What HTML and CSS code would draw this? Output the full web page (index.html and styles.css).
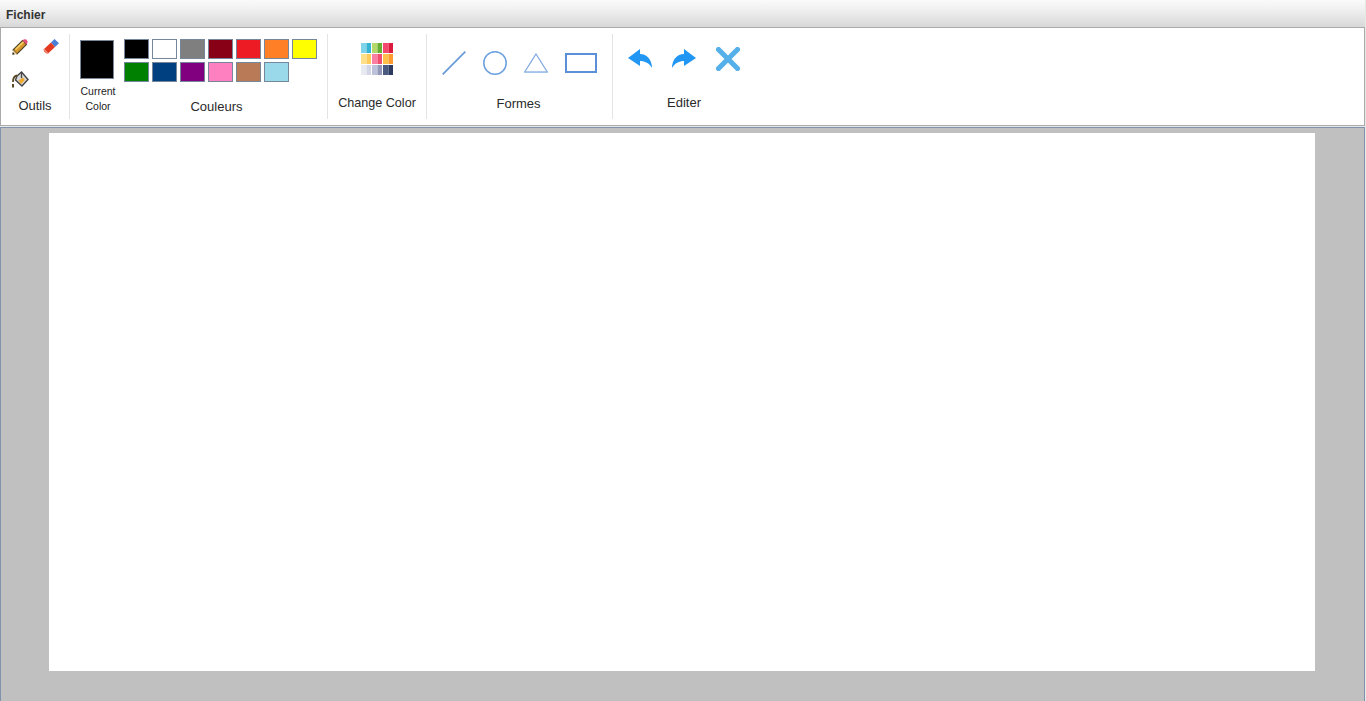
FILE: index.html
```html
<!DOCTYPE html>
<html lang="fr">
<head>
<meta charset="utf-8">
<title>Paint</title>
<link rel="stylesheet" href="styles.css">
</head>
<body>
<div class="app">
  <header class="menubar"><span class="menu-item">Fichier</span></header>
  <section class="ribbon">
    <div class="group tools">
      <div class="tool-grid">
        <svg class="tool" viewBox="0 0 16 16"><path d="M1 11 10.500 1.500l4 4L5 15z" fill="#d9962a" stroke="#4f4526" stroke-width="1.100"/><path d="M3.500 10.500 11.500 2.800" stroke="#f8d56b" stroke-width="1.500"/><path d="m10.500 1.500 1.500-1.300 2.500.3 1.300 2.500-1.300 2.500z" fill="#e4507a"/><path d="M1 11 .3 15.700 5 15z" fill="#e9d3a0"/><path d="M.3 15.700 .8 13l2 2.200z" fill="#222"/></svg>
        <svg class="tool" viewBox="0 0 16 16"><path d="M8 3.500 11.500 0 16 4.200 12 8z" fill="#4a7fd8"/><path d="M8 3.500 .5 10.500l1 2.500 3 2 7.500-7z" fill="#e2391f"/><path d="M.5 10.500 4.500 15l1.200-.6L1.200 9.800z" fill="#f7a592"/></svg>
        <svg class="tool" viewBox="0 0 17 17"><path d="M5 5 9.500 1l6.500 7.500-6 6.500L3.500 9z" fill="#d8d8d8" stroke="#444" stroke-width="1.400"/><path d="m6.500 9.500 4.500-3 2 2.500-4 4z" fill="#efa92c"/><path d="M9.500 1v6" stroke="#444" stroke-width="1.300"/><path d="M5 4.500C2 5 1 7.500 1 11" fill="none" stroke="#5a4a26" stroke-width="1.800"/><path d="M1 13v3.500" stroke="#5a4a26" stroke-width="2"/></svg>
      </div>
      <span class="label tools-label">Outils</span>
    </div>
    <div class="group colors">
      <div class="current">
        <div class="current-swatch"></div>
        <span class="small">Current<br>Color</span>
      </div>
      <div class="palette">
        <div class="swatches">
          <i class="sw c1"></i><i class="sw c2"></i><i class="sw c3"></i><i class="sw c4"></i><i class="sw c5"></i><i class="sw c6"></i><i class="sw c7"></i>
          <i class="sw c8"></i><i class="sw c9"></i><i class="sw c10"></i><i class="sw c11"></i><i class="sw c12"></i><i class="sw c13"></i>
        </div>
        <span class="label couleurs-label">Couleurs</span>
      </div>
    </div>
    <div class="group change">
      <svg class="change-icon" viewBox="0 0 32 32">
        <rect width="5.500" height="10" fill="#7fd4ea"/><rect x="5.500" width="4.500" height="10" fill="#35b4d4"/>
        <rect x="11" width="5.500" height="10" fill="#b4d968"/><rect x="16.500" width="4.500" height="10" fill="#66ad32"/>
        <rect x="22" width="5.500" height="10" fill="#f4486c"/><rect x="27.500" width="4.500" height="10" fill="#dc1a3e"/>
        <rect y="11" width="5.500" height="10" fill="#ffe08a"/><rect x="5.500" y="11" width="4.500" height="10" fill="#ffcb5c"/>
        <rect x="11" y="11" width="5.500" height="10" fill="#fb7fa2"/><rect x="16.500" y="11" width="4.500" height="10" fill="#f14e72"/>
        <rect x="22" y="11" width="5.500" height="10" fill="#ffc14a"/><rect x="27.500" y="11" width="4.500" height="10" fill="#ff9a2e"/>
        <rect y="22" width="5.500" height="10" fill="#e8eaf2"/><rect x="5.500" y="22" width="4.500" height="10" fill="#d2d6e6"/>
        <rect x="11" y="22" width="5.500" height="10" fill="#bcc2da"/><rect x="16.500" y="22" width="4.500" height="10" fill="#9398b8"/>
        <rect x="22" y="22" width="5.500" height="10" fill="#4a5a80"/><rect x="27.500" y="22" width="4.500" height="10" fill="#2b3a5e"/>
      </svg>
      <span class="label change-label">Change Color</span>
    </div>
    <div class="group shapes">
      <div class="shape-row">
        <svg class="shape s-line" viewBox="0 0 24 24"><path d="M.7 23.300 23.300.7" stroke="#6a9bd8" stroke-width="1.800" fill="none"/></svg>
        <svg class="shape s-circle" viewBox="0 0 24 24"><circle cx="12" cy="12" r="11.200" stroke="#6a9fe0" stroke-width="1.500" fill="none"/></svg>
        <svg class="shape s-tri" viewBox="0 0 24 20"><path d="M12 1 23.300 19H.7z" stroke="#7ba6e0" stroke-width="1.200" fill="none"/><path d="M.5 19.200h23" stroke="#a3c2ea" stroke-width="1.500"/></svg>
        <svg class="shape s-rect" viewBox="0 0 32 20"><rect x="1" y="1" width="30" height="18" stroke="#5b90d8" stroke-width="2" fill="none"/></svg>
      </div>
      <span class="label formes-label">Formes</span>
    </div>
    <div class="group edit">
      <div class="edit-row">
        <svg class="edit-icon" viewBox="0 0 24 19"><path d="M12 0 0 9l12 8v-5c5 0 9 2 12 7C24 11 19 5 12 5z" fill="#2196f3"/></svg>
        <svg class="edit-icon" viewBox="0 0 24 19"><path d="M12 0 24 9l-12 8v-5c-5 0-9 2-12 7C0 11 5 5 12 5z" fill="#2196f3"/></svg>
        <svg class="edit-icon close" viewBox="0 0 24 24"><path d="M2.500 2.500 21.500 21.500M21.500 2.500 2.500 21.500" stroke="#55b0ea" stroke-width="5.200" stroke-linecap="round"/></svg>
      </div>
      <span class="label">Editer</span>
    </div>
  </section>
  <main class="workspace"><div class="canvas"></div></main>
</div>
</body>
</html>
```
FILE: styles.css
```css
* { box-sizing: border-box; }
html, body { margin: 0; height: 100%; overflow: hidden; }
body { font-family: "Liberation Sans", Arial, sans-serif; color: #222; background: #e8e8e8; }
.app { display: flex; flex-direction: column; width: 1365px; height: 701px; }
.menubar {
  height: 27px; flex: none; padding: 9px 0 0 6px;
  background: linear-gradient(#fafafa, #f2f2f2 30%, #d8d8d8);
  font-size: 12px; font-weight: bold; line-height: 12px; color: #333;
}
.ribbon {
  height: 99px; flex: none; display: flex; background: #fff;
  border: 1px solid #aaa; padding: 6px 0; margin-bottom: 1px;
}
.group { display: flex; flex-direction: column; height: 85px; border-right: 1px solid #e4e4e4; flex: none; }
.label { font-size: 13px; line-height: 14px; text-align: center; display: block; color: #2a2a2a; }
.tools { width: 69px; }
.tool-grid { display: grid; grid-template-columns: 16px 16px; column-gap: 15px; row-gap: 16px; padding: 5px 0 0 11px; }
.tool { width: 16px; height: 16px; display: block; }
.tool:nth-child(3) { width: 17px; height: 17px; }
.tools-label { margin-top: 11px; }
.colors { width: 258px; flex-direction: row; padding-left: 10px; }
.current { width: 36px; display: flex; flex-direction: column; }
.current-swatch { width: 34px; height: 39px; margin-top: 6px; background: #000; border: 1px solid #7a8899; }
.small { font-size: 10.500px; line-height: 15px; text-align: center; margin-top: 5px; white-space: nowrap; }
.palette { width: 193px; margin-left: 8px; padding-top: 5px; }
.swatches { display: grid; grid-template-columns: repeat(7, 25px); grid-auto-rows: 20px; gap: 3px; }
.sw { display: block; border: 1px solid #76879b; }
.c1 { background: #000; } .c2 { background: #fff; } .c3 { background: #7f7f7f; } .c4 { background: #880015; }
.c5 { background: #ed1c24; } .c6 { background: #ff7f27; } .c7 { background: #ff0; } .c8 { background: #008000; }
.c9 { background: #004080; } .c10 { background: #800080; } .c11 { background: #ff80c0; } .c12 { background: #b97a57; }
.c13 { background: #99d9ea; }
.couleurs-label { margin-top: 18px; padding-right: 8px; }
.change { width: 99px; align-items: center; padding-top: 9px; }
.change-icon { width: 32px; height: 32px; display: block; }
.change-label { margin-top: 21px; white-space: nowrap; font-size: 12.600px; }
.shapes { width: 186px; align-items: center; }
.shape-row { display: flex; align-items: center; align-self: flex-start; padding: 17px 0 0 15px; gap: 17px; height: 41px; }
.shape { display: block; flex: none; }
.s-line, .s-circle { width: 24px; height: 24px; }
.s-tri { width: 24px; height: 20px; }
.s-rect { width: 32px; height: 20px; }
.formes-label { margin-top: 22px; padding-right: 2px; }
.edit { width: 240px; border-right: 0; }
.edit-row { display: flex; align-items: flex-start; padding: 13px 0 0 15px; gap: 20px; height: 34px; }
.edit-icon { width: 24px; height: 19px; display: block; flex: none; margin-top: 2px; }
.edit-icon.close { height: 24px; margin-top: 0; }
.edit .label { width: 142px; margin-top: 28px; }
.workspace {
  flex: 1; min-height: 0; background: #c0c0c0; padding: 5px 49px 0 48px;
  border: 1px solid #7f93ad; border-bottom: 0;
}
.canvas { height: 538px; background: #fff; }
```
